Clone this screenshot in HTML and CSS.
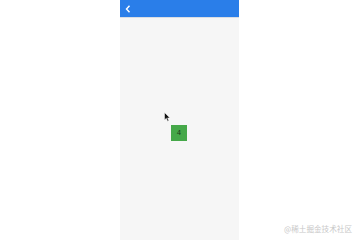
FILE: index.html
```html
<!DOCTYPE html>
<html>
<head>
<meta charset="utf-8">
<link rel="stylesheet" href="styles.css">
</head>
<body>
<div class="stage">
  <div class="phone">
    <div class="appbar">
      <svg class="back" width="6" height="8" viewBox="0 0 6 8"><path d="M4.5 0.8 L1.5 4 L4.5 7.2" fill="none" stroke="#fff" stroke-width="1.4"/></svg>
    </div>
    <div class="body">
      <div class="box">4</div>
      <svg class="cursor" width="7" height="10" viewBox="0 0 7 10"><path d="M0.5 0.5 L0.5 8 L2.3 6.3 L3.6 9.3 L4.8 8.8 L3.6 5.9 L6 5.9 Z" fill="#111" stroke="#fff" stroke-width="0.5"/></svg>
    </div>
  </div>
  <div class="watermark">@稀土掘金技术社区</div>
</div>
</body>
</html>
```
FILE: styles.css
```css
html, body {
  margin: 0;
  padding: 0;
  background: #fff;
}
.stage {
  position: relative;
  width: 360px;
  height: 240px;
  display: flex;
  justify-content: center;
}
.phone {
  width: 119px;
  height: 240px;
  margin-left: -1px;
  display: flex;
  flex-direction: column;
  background: #f6f6f6;
}
.appbar {
  height: 17px;
  background: #2a7ee9;
  border-bottom: 1px solid #d8dde4;
  display: flex;
  align-items: center;
  padding-left: 5px;
}
.back {
  display: block;
}
.body {
  position: relative;
  flex: 1;
}
.box {
  position: absolute;
  left: 51px;
  top: 107px;
  width: 16px;
  height: 16px;
  background: #45a849;
  color: #1b3b1c;
  font-family: "DejaVu Sans", sans-serif;
  font-size: 7px;
  display: flex;
  align-items: center;
  justify-content: center;
}
.cursor {
  position: absolute;
  left: 44px;
  top: 94px;
}
.watermark {
  position: absolute;
  right: 8px;
  top: 223px;
  font-family: "Noto Sans CJK SC", sans-serif;
  font-size: 7.6px;
  line-height: 11px;
  color: #c8c8c8;
}
```
